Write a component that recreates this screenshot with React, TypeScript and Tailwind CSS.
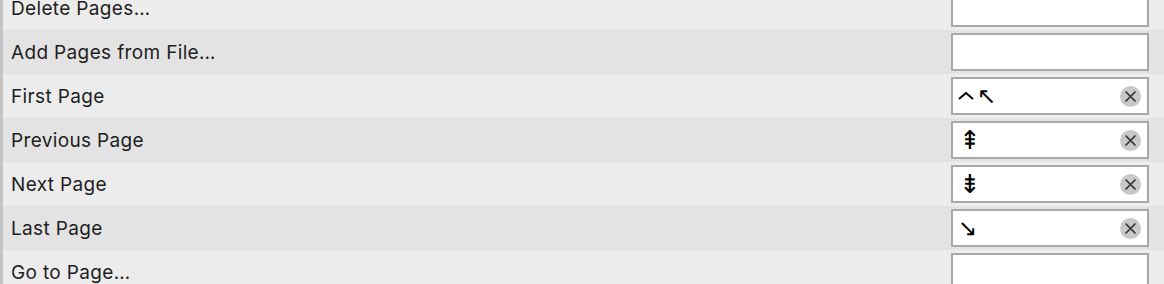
import React from 'react';

type Row = { label: string; shortcut?: 'first' | 'prev' | 'next' | 'last' };

const rows: Row[] = [
  { label: 'Delete Pages…' },
  { label: 'Add Pages from File…' },
  { label: 'First Page', shortcut: 'first' },
  { label: 'Previous Page', shortcut: 'prev' },
  { label: 'Next Page', shortcut: 'next' },
  { label: 'Last Page', shortcut: 'last' },
  { label: 'Go to Page…' },
];

// control key symbol, drawn as a chevron
const ControlMark = () => (
  <svg width="16" height="8" viewBox="0 0 16 8" className="shrink-0">
    <path d="M1 7 L8 1 L15 7" fill="none" stroke="#000" strokeWidth="2" />
  </svg>
);

const Shortcut = ({ kind }: { kind: Row['shortcut'] }) => {
  const glyph = "font-['DejaVu_Sans',sans-serif] leading-none text-black";
  switch (kind) {
    case 'first':
      return (
        <div className="flex items-center gap-[3px]">
          <ControlMark />
          <span className={`${glyph} text-[23px]`}>↖</span>
        </div>
      );
    case 'prev':
      return <span className={`${glyph} pl-[1px] text-[26px]`}>⇞</span>;
    case 'next':
      return <span className={`${glyph} pl-[1px] text-[26px]`}>⇟</span>;
    case 'last':
      return <span className={`${glyph} text-[23px]`}>↘</span>;
    default:
      return null;
  }
};

const ClearButton = () => (
  <svg width="21" height="21" viewBox="0 0 21 21" className="shrink-0">
    <circle cx="10.5" cy="10.5" r="10.5" fill="#c8c8c8" />
    <path d="M6 6 L15 15 M15 6 L6 15" stroke="#333333" strokeWidth="1.7" strokeLinecap="round" />
  </svg>
);

export default function App() {
  return (
    <div className="h-[284px] w-[1164px] overflow-hidden bg-[#ececec]">
      <div className="-mt-[14px] border-l-[3px] border-[#c3c3c3]">
        {rows.map((row, i) => (
          <div
            key={row.label}
            className={`flex h-[44px] items-center justify-between pl-[8px] pr-[15px] ${
              i % 2 === 1 ? 'bg-[#e3e3e3]' : 'bg-[#ececec]'
            }`}
          >
            <span className="pt-[2px] font-['Inter',sans-serif] text-[19px] tracking-[0.35px] text-[#1e1e1e]">
              {row.label}
            </span>
            <div className="flex h-[38px] w-[198px] items-center justify-between border-2 border-[#a8a8a8] bg-white pl-[5px] pr-[6px]">
              <Shortcut kind={row.shortcut} />
              {row.shortcut && <ClearButton />}
            </div>
          </div>
        ))}
      </div>
    </div>
  );
}
